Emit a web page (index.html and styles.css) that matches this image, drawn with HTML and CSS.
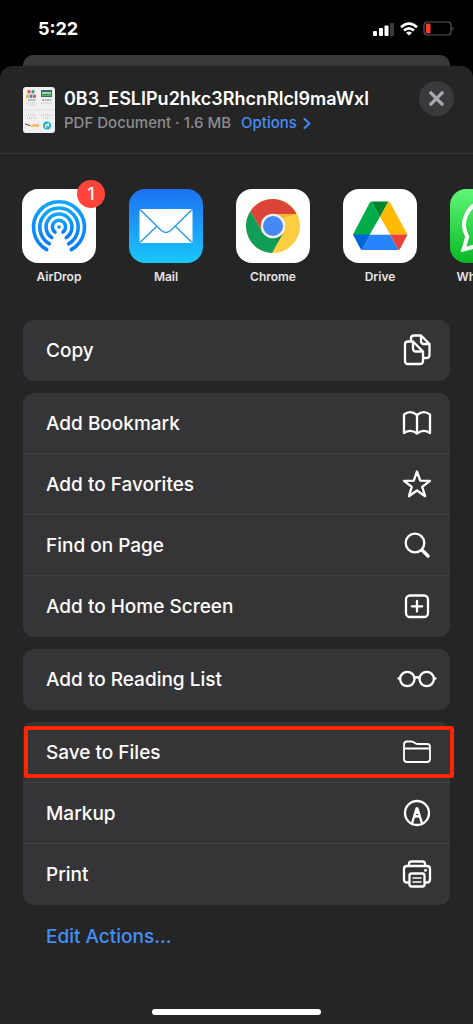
FILE: index.html
```html
<!DOCTYPE html>
<html lang="en">
<head>
    <meta charset="UTF-8">
    <meta name="viewport" content="width=device-width, initial-scale=1.0">
    <title>Share</title>
    <link rel="stylesheet" href="styles.css">
</head>
<body>

    <!-- Status bar -->
    <header class="status-bar">
        <span class="time">5:22</span>
        <div class="status-icons">
            <svg width="22" height="14" viewBox="0 0 22 14" fill="#fff">
                <rect x="0" y="9" width="4" height="5" rx="1"/>
                <rect x="6" y="6" width="4" height="8" rx="1"/>
                <rect x="11.5" y="3.5" width="4" height="10.5" rx="1"/>
                <rect x="17" y="1" width="4" height="13" rx="1" fill="#3a3a3c"/>
            </svg>
            <svg width="18" height="14" viewBox="0 0 18 14" fill="none" stroke="#fff" stroke-width="2.6">
                <path d="M1 5.2Q9-1.8 17 5.2M4 8.5Q9 4.2 14 8.5"/>
                <path d="M9 13.5L6 10.7Q9 8.4 12 10.7Z" fill="#fff" stroke="none"/>
            </svg>
            <svg width="31" height="15" viewBox="0 0 31 15">
                <rect x="1" y="1" width="27" height="13" rx="3.5" fill="none" stroke="#58585a" stroke-width="1.2"/>
                <rect x="3" y="2.5" width="4.500" height="10" rx="1.5" fill="#ff3b30"/>
                <path d="M29.5 5.5q2 2 0 4z" fill="#6a6a6c"/>
            </svg>
        </div>
    </header>

    <div class="back-sheet"></div>

    <main class="sheet">
        <!-- Shared document -->
        <section class="doc">
            <svg class="thumb" width="32" height="46" viewBox="0 0 32 46">
                <rect width="32" height="46" rx="3" fill="#f0f0f0"/>
                <g>
                    <rect x="4.500" y="3" width="3" height="3.500" rx="1" fill="#e8574c"/>
                    <rect x="8.500" y="3" width="3" height="3.500" rx="1" fill="#35a46b"/>
                    <rect x="3" y="7.500" width="3" height="3.500" rx="1" fill="#f2b32c"/>
                    <rect x="6.500" y="7.500" width="3" height="3.500" rx="1" fill="#4285f4"/>
                    <rect x="10" y="7.500" width="3" height="3.500" rx="1" fill="#e8574c"/>
                </g>
                <rect x="18" y="3" width="11" height="7" fill="#3e6b58"/>
                <path d="M19 5h9v2h-9z" fill="#9ccfd8"/>
                <path d="M19 9V7l4 1 5-1v2z" fill="#53b848"/>
                <path d="M5 13h7M19 13h9" stroke="#777" stroke-dasharray="2 .5"/>
                <path d="M3 16h10M5 18h8M18 16h11M3 28h9M4 31h9M18 28h11M20 31h8" stroke="#b5b5b5" stroke-dasharray="1 1"/>
                <path d="M1 23h30" stroke="#e2e2e2"/>
                <path d="M3 37l5 1 2-1h6v3H9l-3-1z" fill="#f3c277"/>
                <path d="M2 37l5 1.500" stroke="#555"/>
                <circle cx="24" cy="38.500" r="4" fill="#1fb6d4"/>
                <path d="M22 41v-3l4-2v3z" fill="#fff"/>
                <path d="M23 40l2-2" stroke="#e36b4a"/>
            </svg>
            <div class="doc-info">
                <h1>0B3_ESLIPu2hkc3RhcnRlcl9maWxl</h1>
                <div class="doc-meta">
                    <span>PDF Document · 1.6 MB</span>
                    <a href="#options">Options
                        <svg width="8" height="11" viewBox="0 0 8 11" fill="none" stroke="#448ef8" stroke-width="2" stroke-linecap="round" stroke-linejoin="round"><path d="M1.500 1l5 4.500-5 4.500"/></svg>
                    </a>
                </div>
            </div>
            <button class="close" aria-label="Close">
                <svg width="15" height="15" viewBox="0 0 15 15" stroke="#a8a8ad" stroke-width="3.400" stroke-linecap="round"><path d="M1.900 1.900l11.200 11.200M13.100 1.900L1.900 13.100"/></svg>
            </button>
        </section>

        <!-- Apps row, scrolls sideways -->
        <nav class="apps">
            <button class="app">
                <svg viewBox="0 0 74 74">
                    <rect width="74" height="74" rx="16" fill="#fff"/>
                    <defs>
                        <linearGradient id="air" x1="0" y1="0" x2="0" y2="1">
                            <stop offset="0" stop-color="#12a5fb"/>
                            <stop offset="1" stop-color="#087cf9"/>
                        </linearGradient>
                    </defs>
                    <g fill="none" stroke="url(#air)" stroke-width="3.600" stroke-linecap="round">
                        <path d="M24.700 60.600A25.500 25.500 0 1 1 49.300 60.600"/>
                        <path d="M27.300 54.800A19.200 19.200 0 1 1 46.700 54.800"/>
                        <path d="M29.700 48.600A12.900 12.900 0 1 1 44.300 48.600"/>
                        <path d="M33 43.100A6.600 6.600 0 1 1 41 43.100"/>
                    </g>
                    <circle cx="37" cy="38" r="1.800" fill="#0a90fa"/>
                </svg>
                <span class="badge">1</span>
                <span class="app-name">AirDrop</span>
            </button>
            <button class="app">
                <svg viewBox="0 0 74 74">
                    <defs>
                        <linearGradient id="mail" x1="0" y1="0" x2="0" y2="1">
                            <stop offset="0" stop-color="#1e70f2"/>
                            <stop offset="1" stop-color="#19c8fb"/>
                        </linearGradient>
                    </defs>
                    <rect width="74" height="74" rx="16" fill="url(#mail)"/>
                    <rect x="10.500" y="20" width="53" height="34" rx="2" fill="#fff"/>
                    <g fill="none" stroke="#2b9cf5" stroke-width="1.500">
                        <path d="M11.500 21L32 41.300q5 4.500 10 0L62.500 21"/>
                        <path d="M11.500 53l16-15.500M62.500 53l-16-15.500"/>
                    </g>
                </svg>
                <span class="app-name">Mail</span>
            </button>
            <button class="app">
                <svg viewBox="0 0 74 74">
                    <rect width="74" height="74" rx="16" fill="#fff"/>
                    <circle cx="37" cy="37" r="27" fill="#ffcd40"/>
                    <path d="M37 10A27 27 0 0 1 60.400 25H37L26.600 43L14.400 22.200A27 27 0 0 1 37 10z" fill="#db4437"/>
                    <path d="M14.400 22.200A27 27 0 0 0 36 64L47.400 43.500H26.600z" fill="#0f9d58"/>
                    <path d="M27 43.500l10 4.500 10.400-4.500-5 9z" fill="#0b7d45" opacity=".5"/>
                    <path d="M37 25h23.400l-14 4z" fill="#d99b22" opacity=".5"/>
                    <circle cx="37" cy="37" r="12.300" fill="#f1f1f1"/>
                    <circle cx="37" cy="37" r="10" fill="#4688f4"/>
                </svg>
                <span class="app-name">Chrome</span>
            </button>
            <button class="app">
                <svg viewBox="0 0 74 74">
                    <rect width="74" height="74" rx="16" fill="#fff"/>
                    <path d="M28.500 12.500L37 28L20 57L10 45.500L26 15q1-2.500 2.500-2.500z" fill="#00ac47"/>
                    <path d="M28.500 12.500h17L37 28z" fill="#00832d"/>
                    <path d="M45.500 12.500q1 0 2 2L64.500 45.500H47L37 28z" fill="#ffba00"/>
                    <path d="M10 45.500h17.500L19 61q-1 0-2-2z" fill="#0066da"/>
                    <path d="M27.500 45.500H47L55.500 61H19z" fill="#2684fc"/>
                    <path d="M47 45.500h17.500L57.500 59q-1 2-2 2z" fill="#ea4335"/>
                    <path d="M37 28l10 17.500H27.200z" fill="#fff"/>
                </svg>
                <span class="app-name">Drive</span>
            </button>
            <button class="app">
                <svg viewBox="0 0 74 74">
                    <defs>
                        <linearGradient id="wa" x1="0" y1="0" x2="0" y2="1">
                            <stop offset="0" stop-color="#5ff777"/>
                            <stop offset="1" stop-color="#09b826"/>
                        </linearGradient>
                    </defs>
                    <rect width="74" height="74" rx="16" fill="url(#wa)"/>
                    <path d="M13.500 60.500l3.700-12.700A24 24 0 1 1 26.500 57z" fill="none" stroke="#fff" stroke-width="4"/>
                    <path d="M29 25c-4 3-3 9 4 16s14 9 17 4l-6-5-3 3c-4-2-6-4-8-8l2-3z" fill="#fff"/>
                </svg>
                <span class="app-name">WhatsApp</span>
            </button>
        </nav>

        <!-- Actions -->
        <section class="actions">
            <div class="group">
                <button class="row">Copy
                    <svg class="icon" viewBox="0 0 40 40">
                        <path d="M8 14.500q0-3 3-3h5L26 21.500V31q0 3-3 3H11q-3 0-3-3zM16 11.500v7q0 3 3 3h7M14 11V8.500q0-3 3-3H24l8.500 8.500V25q0 3-3 3H26.500M24 5.500V11q0 3 3 3h5.500"/>
                    </svg>
                </button>
            </div>

            <div class="group">
                <button class="row">Add Bookmark
                    <svg class="icon" viewBox="0 0 40 40">
                        <path d="M20 12Q13.500 6.500 7 11.500v18.500q6.500-4.500 13 .500q6.500-5 13-.500V11.500q-6.500-5-13 .500zM20 12v18.500"/>
                    </svg>
                </button>
                <button class="row">Add to Favorites
                    <svg class="icon" viewBox="0 0 40 40">
                        <path d="M20 7.500l3.200 9.200 9.800.200-7.800 5.900 2.900 9.400L20 26.500l-8.100 5.700 2.900-9.400L7 16.900l9.800-.200z"/>
                    </svg>
                </button>
                <button class="row">Find on Page
                    <svg class="icon" viewBox="0 0 40 40">
                        <circle cx="18" cy="18" r="9.300"/>
                        <path d="M25 25l6 6" stroke-width="3.400"/>
                    </svg>
                </button>
                <button class="row">Add to Home Screen
                    <svg class="icon" viewBox="0 0 40 40">
                        <rect x="9" y="9.500" width="22" height="21.500" rx="4"/>
                        <path d="M20 15v10.500M14.800 20.300h10.400"/>
                    </svg>
                </button>
            </div>

            <div class="group">
                <button class="row">Add to Reading List
                    <svg class="icon" viewBox="0 0 40 40">
                        <circle cx="10.300" cy="20" r="7.200"/>
                        <circle cx="29.700" cy="20" r="7.200"/>
                        <path d="M17.500 19q2.500-1.500 5 0M3 19.500H1.500M37 19.500h1.500"/>
                    </svg>
                </button>
            </div>

            <div class="group">
                <button class="row highlighted">Save to Files
                    <svg class="icon thin" viewBox="0 0 40 40">
                        <path d="M7 12.500q0-3 3-3h4.500q1.500 0 3 1.300t3 1.200H30q3 0 3 3V27q0 3-3 3H10q-3 0-3-3zM7 16.500h26"/>
                    </svg>
                </button>
                <button class="row">Markup
                    <svg class="icon" viewBox="0 0 40 40">
                        <circle cx="20" cy="20" r="12"/>
                        <path d="M15 30.500l4.500-15h1l4.500 15M17 24q3-1.500 6 0"/>
                        <path d="M20 14l2.300 7h-4.600z" fill="#fff" stroke="none"/>
                    </svg>
                </button>
                <button class="row">Print
                    <svg class="icon" viewBox="0 0 40 40">
                        <path d="M12 12V10q0-2.500 2.500-2.500h11q2.500 0 2.500 2.500v2M12 28.500h-2q-3 0-3-3V15q0-3 3-3h20q3 0 3 3v10.500q0 3-3 3h-2"/>
                        <rect x="12.500" y="19.500" width="15" height="13" rx="2"/>
                        <path d="M16 24h8M16 28h8" stroke-width="1.600"/>
                        <circle cx="28.500" cy="16.300" r="1.500" fill="#fff" stroke="none"/>
                    </svg>
                </button>
            </div>

            <a class="edit" href="#edit">Edit Actions...</a>
        </section>

        <div class="home-indicator"></div>
    </main>

</body>
</html>
```

FILE: styles.css
```css
* {
    box-sizing: border-box;
}
body {
    margin: 0;
    min-height: 100vh;
    display: flex;
    flex-direction: column;
    background-color: #000;
    color: #fff;
    font-family: Inter, "Liberation Sans", sans-serif;
    overflow-x: hidden;
}
button {
    border: none;
    padding: 0;
    background: none;
    color: inherit;
    font: inherit;
    cursor: pointer;
}
a {
    color: #448ef8;
    text-decoration: none;
}
svg {
    display: block;
    flex-shrink: 0;
}

/* Status bar */
.status-bar {
    display: flex;
    justify-content: space-between;
    align-items: center;
    height: 55px;
    padding: 2px 19px 0 38px;
}
.time {
    font-size: 18px;
    font-weight: 700;
}
.status-icons {
    display: flex;
    align-items: center;
    gap: 5px;
}

/* Sheet */
.back-sheet {
    height: 11px;
    margin: 0 23px;
    background-color: #39393b;
    border-radius: 10px 10px 0 0;
}
.sheet {
    flex: 1;
    display: flex;
    flex-direction: column;
    background-color: #252525;
    border-radius: 12px 12px 0 0;
}
.doc {
    display: flex;
    align-items: flex-start;
    height: 88px;
    padding: 15px 19px 0 23px;
    border-bottom: 1px solid #373838;
}
.thumb {
    margin-top: 6px;
}
.doc-info {
    flex: 1;
    min-width: 0;
    margin: 6px 0 0 9px;
}
h1 {
    margin: 0;
    font-size: 18px;
    line-height: 24px;
    font-weight: 600;
}
.doc-meta {
    display: flex;
    gap: 10px;
    font-size: 15px;
    line-height: 24px;
    font-weight: 500;
    color: #8b8b90;
    white-space: nowrap;
}
.doc-meta a {
    display: flex;
    align-items: center;
    gap: 6px;
}
.close {
    display: flex;
    align-items: center;
    justify-content: center;
    width: 35px;
    height: 35px;
    border-radius: 50%;
    background-color: #3a3a3d;
}

/* Apps */
.apps {
    display: flex;
    gap: 33px;
    padding: 35px 0 34px 22px;
    overflow: hidden;
}
.app {
    position: relative;
    flex: 0 0 74px;
    display: flex;
    flex-direction: column;
    align-items: center;
    gap: 5px;
}
.app svg {
    width: 74px;
    height: 74px;
}
.app-name {
    font-size: 12px;
    line-height: 18px;
    font-weight: 600;
    color: #e6e6e6;
}
.badge {
    position: absolute;
    top: -9px;
    right: -9px;
    width: 28px;
    height: 28px;
    border-radius: 50%;
    background-color: #ff443a;
    font-size: 17px;
    line-height: 28px;
    font-weight: 500;
    text-align: center;
}

/* Actions */
.actions {
    display: flex;
    flex-direction: column;
    gap: 12px;
    padding: 0 23px;
}
.group {
    background-color: #353537;
    border-radius: 11px;
}
.row {
    position: relative;
    display: flex;
    justify-content: space-between;
    align-items: center;
    width: 100%;
    height: 61px;
    padding: 0 13px 0 23px;
    border-bottom: 1px solid #414143;
    font-size: 19px;
    font-weight: 500;
    text-align: left;
}
.row:last-child {
    border-bottom-color: transparent;
}
.icon {
    width: 40px;
    height: 40px;
    fill: none;
    stroke: #fff;
    stroke-width: 2.3;
    stroke-linecap: round;
    stroke-linejoin: round;
}
.icon.thin {
    stroke-width: 1.8;
}
.highlighted::after {
    content: "";
    position: absolute;
    top: 4px;
    right: -4px;
    bottom: 4px;
    left: 1px;
    border: 4px solid #ff2600;
    border-radius: 2px;
}
.edit {
    align-self: flex-start;
    margin: 8px 23px;
    font-size: 19px;
    line-height: 24px;
    font-weight: 500;
}
.home-indicator {
    width: 169px;
    height: 6px;
    margin: auto auto 9px;
    border-radius: 3px;
    background-color: #fff;
}
```
